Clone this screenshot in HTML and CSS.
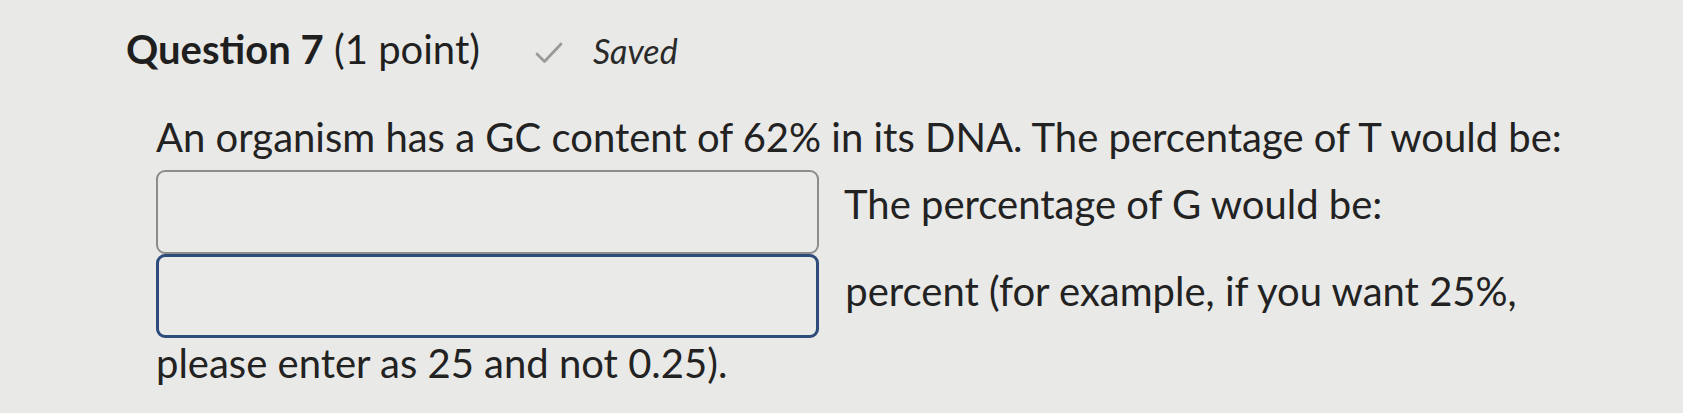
FILE: index.html
```html
<!DOCTYPE html>
<html lang="en">
<head>
<meta charset="utf-8">
<title>Question 7</title>
<link rel="stylesheet" href="styles.css">
</head>
<body>
<main class="question">
  <header class="q-header">
    <h2 class="q-title"><span class="q-num">Question 7</span> <span class="q-points">(1 point)</span></h2>
    <span class="q-status">
      <svg class="q-check" viewBox="0 0 28 24" width="28" height="24" aria-hidden="true"><path d="M2 13 L9.5 20.5 L26 3" fill="none" stroke="#9a9a9a" stroke-width="2.8" stroke-linecap="round" stroke-linejoin="round"/></svg>
      <em class="q-saved">Saved</em>
    </span>
  </header>
  <div class="q-body">An organism has a GC content of 62% in its DNA. The percentage of T would be: <input class="blank blank-first" type="text" aria-label="percentage of T"> The percentage of G would be: <input class="blank blank-focus" type="text" aria-label="percentage of G"> percent (for example, if you want 25%, please enter as 25 and not 0.25).</div>
</main>
</body>
</html>
```

FILE: styles.css
```css
html, body {
  margin: 0;
  padding: 0;
  background: #e9e9e7;
}
body {
  font-family: "Lato", "Open Sans", sans-serif;
  color: #262626;
  width: 1683px;
  height: 413px;
  overflow: hidden;
}
.question {
  padding: 25px 0 0 126px;
}
.q-header {
  display: flex;
  align-items: baseline;
  gap: 55px;
  height: 48px;
}
.q-title {
  margin: 0;
  font-size: 40px;
  line-height: 48px;
  font-weight: 400;
  color: #1f1f1f;
}
.q-num {
  font-weight: 700;
}
.q-status {
  display: flex;
  align-items: baseline;
  gap: 30px;
}
.q-check {
  align-self: center;
  position: relative;
  top: 2px;
}
.q-saved {
  font-style: italic;
  font-size: 34px;
  color: #2a2a2a;
}
.q-body {
  margin: 39px 0 0 30px;
  width: 1440px;
  font-size: 40px;
  line-height: 51px;
  color: #222;
}
.blank {
  display: inline-block;
  vertical-align: middle;
  box-sizing: border-box;
  width: 663px;
  height: 84px;
  margin: 0 16px 0 0;
  border: 2px solid #8c8c8c;
  border-radius: 9px;
  background: #eaeae8;
  font: inherit;
}
.blank-first {
  margin-top: 7px;
}
.blank-focus {
  border: 3px solid #2e4b7c;
}
```
